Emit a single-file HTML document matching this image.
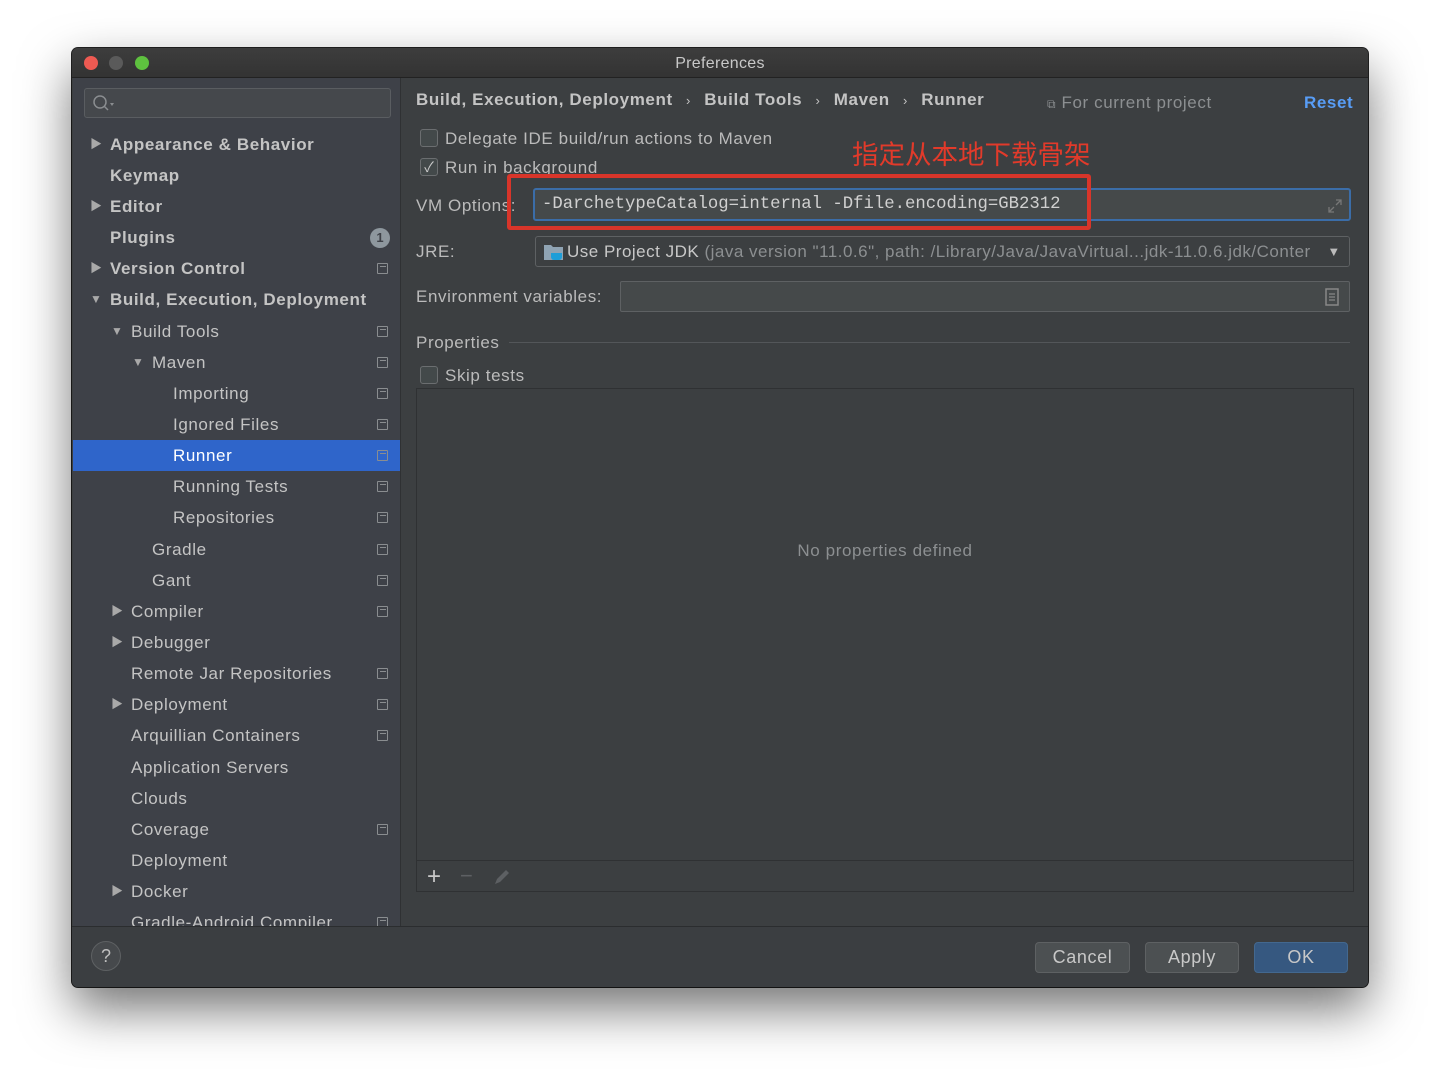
<!DOCTYPE html>
<html><head><meta charset="utf-8"><style>
*{box-sizing:border-box;margin:0;padding:0}
body{width:1440px;height:1083px;background:#fff;position:relative;overflow:hidden;font-family:"Liberation Sans","Noto Sans CJK SC",sans-serif;color:#bbbbbb;letter-spacing:.6px}
.win{position:absolute;left:72px;top:48px;width:1296px;height:939px;background:#3c3f41;border-radius:6px;box-shadow:0 22px 50px rgba(0,0,0,.55),0 0 0 1px #222;overflow:hidden}
.title{position:absolute;left:0;top:0;width:100%;height:30px;background:linear-gradient(#3d3d3d,#333);border-bottom:1px solid #222;text-align:center;line-height:32px;font-size:16px;color:#c8c8c8;letter-spacing:.3px}
.dot{position:absolute;top:8px;width:14px;height:14px;border-radius:50%}
.side{position:absolute;left:1px;top:30px;width:328px;height:848px;background:#3e4148;border-right:1px solid #2f3133;overflow:hidden}
.search{position:absolute;left:11px;top:10px;width:307px;height:30px;border:1px solid #5a5d61;border-radius:3px;background:#45484c}
.row{position:absolute;left:0;width:328px;height:31px;line-height:31px;font-size:17px;color:#c4c4c4;margin-top:1px}
.row.b{font-weight:bold}
.row.sel{background:#2f65ca;color:#fff}
.arr{position:absolute;font-size:12px;color:#a9a9a9;top:0}
.ci{position:absolute;left:304px;top:10px;width:11px;height:11px;border:1.5px solid #8a8d90;border-radius:1px}
.ci:after{content:"";position:absolute;left:2px;top:2px;width:6px;height:6px;border-top:1.5px solid #8a8d90;border-bottom:1.5px solid #8a8d90}
.main{position:absolute;left:330px;top:30px;right:0;height:848px}
.abs{position:absolute}
.cb{position:absolute;width:18px;height:18px;border:1px solid #6b6e70;border-radius:3px;background:#43494a}
.lbl{position:absolute;font-size:17px;color:#bbbbbb;white-space:nowrap}
.bottom{position:absolute;left:0;top:878px;width:100%;height:61px;background:#3b3e41;border-top:1px solid #2b2d2f}
.btn{position:absolute;top:15px;height:31px;border:1px solid #5e6163;border-radius:4px;background:#4c5052;color:#c8c8c8;font-size:18px;text-align:center;line-height:29px}
</style></head><body>
<div class="win">
 <div class="title">Preferences
  <div class="dot" style="left:12px;background:#ee5a52"></div>
  <div class="dot" style="left:37px;background:#5a5a5a"></div>
  <div class="dot" style="left:63px;background:#5ec13f"></div>
 </div>
 <div class="side">
  <div class="search"><svg width="30" height="28" style="position:absolute;left:4px;top:1px"><circle cx="11" cy="12" r="6" fill="none" stroke="#8a8d90" stroke-width="1.5"/><line x1="15" y1="16" x2="19" y2="20" stroke="#8a8d90" stroke-width="1.5"/><path d="M21 13 l4 0 l-2 3z" fill="#8a8d90"/></svg></div>
  <div class="row b" style="top:50px"><span class="arr" style="left:17px">▶</span><span style="position:absolute;left:37px">Appearance &amp; Behavior</span></div>
  <div class="row b" style="top:81px"><span style="position:absolute;left:37px">Keymap</span></div>
  <div class="row b" style="top:112px"><span class="arr" style="left:17px">▶</span><span style="position:absolute;left:37px">Editor</span></div>
  <div class="row b" style="top:143px"><span style="position:absolute;left:37px">Plugins</span><span style="position:absolute;left:297px;top:6px;width:20px;height:20px;border-radius:50%;background:#8e979e;color:#3e4148;font-size:13px;line-height:20px;text-align:center;letter-spacing:0">1</span></div>
  <div class="row b" style="top:174px"><span class="arr" style="left:17px">▶</span><span style="position:absolute;left:37px">Version Control</span><i class="ci"></i></div>
  <div class="row b" style="top:205px"><span class="arr" style="left:17px">▼</span><span style="position:absolute;left:37px">Build, Execution, Deployment</span></div>
  <div class="row" style="top:237px"><span class="arr" style="left:38px">▼</span><span style="position:absolute;left:58px">Build Tools</span><i class="ci"></i></div>
  <div class="row" style="top:268px"><span class="arr" style="left:59px">▼</span><span style="position:absolute;left:79px">Maven</span><i class="ci"></i></div>
  <div class="row" style="top:299px"><span style="position:absolute;left:100px">Importing</span><i class="ci"></i></div>
  <div class="row" style="top:330px"><span style="position:absolute;left:100px">Ignored Files</span><i class="ci"></i></div>
  <div class="row sel" style="top:361px"><span style="position:absolute;left:100px">Runner</span><i class="ci"></i></div>
  <div class="row" style="top:392px"><span style="position:absolute;left:100px">Running Tests</span><i class="ci"></i></div>
  <div class="row" style="top:423px"><span style="position:absolute;left:100px">Repositories</span><i class="ci"></i></div>
  <div class="row" style="top:455px"><span style="position:absolute;left:79px">Gradle</span><i class="ci"></i></div>
  <div class="row" style="top:486px"><span style="position:absolute;left:79px">Gant</span><i class="ci"></i></div>
  <div class="row" style="top:517px"><span class="arr" style="left:38px">▶</span><span style="position:absolute;left:58px">Compiler</span><i class="ci"></i></div>
  <div class="row" style="top:548px"><span class="arr" style="left:38px">▶</span><span style="position:absolute;left:58px">Debugger</span></div>
  <div class="row" style="top:579px"><span style="position:absolute;left:58px">Remote Jar Repositories</span><i class="ci"></i></div>
  <div class="row" style="top:610px"><span class="arr" style="left:38px">▶</span><span style="position:absolute;left:58px">Deployment</span><i class="ci"></i></div>
  <div class="row" style="top:641px"><span style="position:absolute;left:58px">Arquillian Containers</span><i class="ci"></i></div>
  <div class="row" style="top:673px"><span style="position:absolute;left:58px">Application Servers</span></div>
  <div class="row" style="top:704px"><span style="position:absolute;left:58px">Clouds</span></div>
  <div class="row" style="top:735px"><span style="position:absolute;left:58px">Coverage</span><i class="ci"></i></div>
  <div class="row" style="top:766px"><span style="position:absolute;left:58px">Deployment</span></div>
  <div class="row" style="top:797px"><span class="arr" style="left:38px">▶</span><span style="position:absolute;left:58px">Docker</span></div>
  <div class="row" style="top:828px"><span style="position:absolute;left:58px">Gradle-Android Compiler</span><i class="ci"></i></div>
 </div>
 <div class="main">
  <div class="lbl" style="left:14px;top:12px;font-weight:bold;color:#c4c4c4">Build, Execution, Deployment <span style="font-weight:normal;font-size:13px;margin:0 8px">›</span> Build Tools <span style="font-weight:normal;font-size:13px;margin:0 8px">›</span> Maven <span style="font-weight:normal;font-size:13px;margin:0 8px">›</span> Runner</div>
  <div class="lbl" style="left:645px;top:15px;color:#8c8f91"><span style="font-size:12px">⧉</span> For current project</div>
  <div class="lbl" style="left:902px;top:15px;color:#589df6;font-weight:bold">Reset</div>
  <div class="cb" style="left:18px;top:51px"></div>
  <div class="lbl" style="left:43px;top:51px">Delegate IDE build/run actions to Maven</div>
  <div class="cb" style="left:18px;top:80px;color:#ccc;font-size:14px;line-height:16px;text-align:center;letter-spacing:0">✓</div>
  <div class="lbl" style="left:43px;top:80px">Run in background</div>
  <div class="lbl" style="left:450px;top:55px;color:#e23a2a;font-size:26.5px;font-family:'Noto Sans CJK SC',sans-serif;letter-spacing:0">指定从本地下载骨架</div>
  <div class="lbl" style="left:14px;top:118px">VM Options:</div>
  <div class="abs" style="left:131px;top:110px;width:818px;height:33px;border:2px solid #3b6da8;border-radius:3px;background:#45494a;font-family:'Liberation Mono',monospace;font-size:17.3px;letter-spacing:0;line-height:30px;padding-left:7px;color:#d0d0d0;white-space:nowrap">-DarchetypeCatalog=internal -Dfile.encoding=GB2312
   <svg width="16" height="16" style="position:absolute;right:6px;top:8px"><path d="M9 2h5v5M14 2l-5 5M7 14H2V9M2 14l5-5" fill="none" stroke="#777" stroke-width="1.3"/></svg></div>
  <div class="abs" style="left:105px;top:96px;width:584px;height:56px;border:4px solid #d8352a;border-radius:3px"></div>
  <div class="lbl" style="left:14px;top:164px">JRE:</div>
  <div class="abs" style="left:133px;top:158px;width:815px;height:31px;border:1px solid #5e6163;border-radius:3px;background:#3c3f41;font-size:17px;line-height:30px;white-space:nowrap;overflow:hidden;padding-left:31px;color:#c8c8c8;letter-spacing:.5px">Use Project JDK <span style="color:#8c8f91">(java version "11.0.6", path: /Library/Java/JavaVirtual...jdk-11.0.6.jdk/Conter</span>
   <svg width="22" height="20" style="position:absolute;left:7px;top:5px"><path d="M1 3h7l2 2h10v13H1z" fill="#8fa3b3"/><path d="M8 11h11v4a3 3 0 0 1-3 3h-5a3 3 0 0 1-3-3z" fill="#1e9ed8"/></svg>
   <span style="position:absolute;right:0;top:0;width:30px;height:29px;background:#3c3f41;color:#bbb;font-size:13px;text-align:center">▼</span></div>
  <div class="lbl" style="left:14px;top:209px">Environment variables:</div>
  <div class="abs" style="left:218px;top:203px;width:730px;height:31px;border:1px solid #5e6163;border-radius:2px;background:#45494a">
   <svg width="14" height="18" style="position:absolute;right:10px;top:6px"><rect x="1" y="1" width="12" height="16" fill="none" stroke="#888" stroke-width="1.5"/><path d="M4 6h6M4 9h6M4 12h6" stroke="#888" stroke-width="1.2"/></svg></div>
  <div class="lbl" style="left:14px;top:255px">Properties</div>
  <div class="abs" style="left:107px;top:264px;width:841px;height:1px;background:#535659"></div>
  <div class="cb" style="left:18px;top:288px"></div>
  <div class="lbl" style="left:43px;top:288px">Skip tests</div>
  <div class="abs" style="left:14px;top:310px;width:938px;height:504px;border:1px solid #2f3133;background:#3c3f41">
   <div class="abs" style="left:0;right:0;top:152px;text-align:center;font-size:17px;color:#8c8f91">No properties defined</div>
   <div class="abs" style="left:0;right:0;top:471px;height:1px;background:#2f3133"></div>
   <div class="abs" style="left:10px;top:474px;font-size:24px;color:#c8c8c8">+</div>
   <div class="abs" style="left:43px;top:474px;font-size:22px;color:#5d6063">−</div>
   <svg width="20" height="20" style="position:absolute;left:75px;top:478px"><path d="M3 17l2-5 9-9 3 3-9 9z" fill="#5d6063"/></svg>
  </div>
 </div>
 <div class="bottom">
  <div class="abs" style="left:19px;top:14px;width:30px;height:30px;border-radius:50%;border:1px solid #5e6163;background:#46494c;text-align:center;line-height:28px;font-size:18px;color:#c0c0c0;letter-spacing:0">?</div>
  <div class="btn" style="left:963px;width:95px">Cancel</div>
  <div class="btn" style="left:1073px;width:94px">Apply</div>
  <div class="btn" style="left:1182px;width:94px;background:#365880;border-color:#43688f">OK</div>
 </div>
</div>
</body></html>
